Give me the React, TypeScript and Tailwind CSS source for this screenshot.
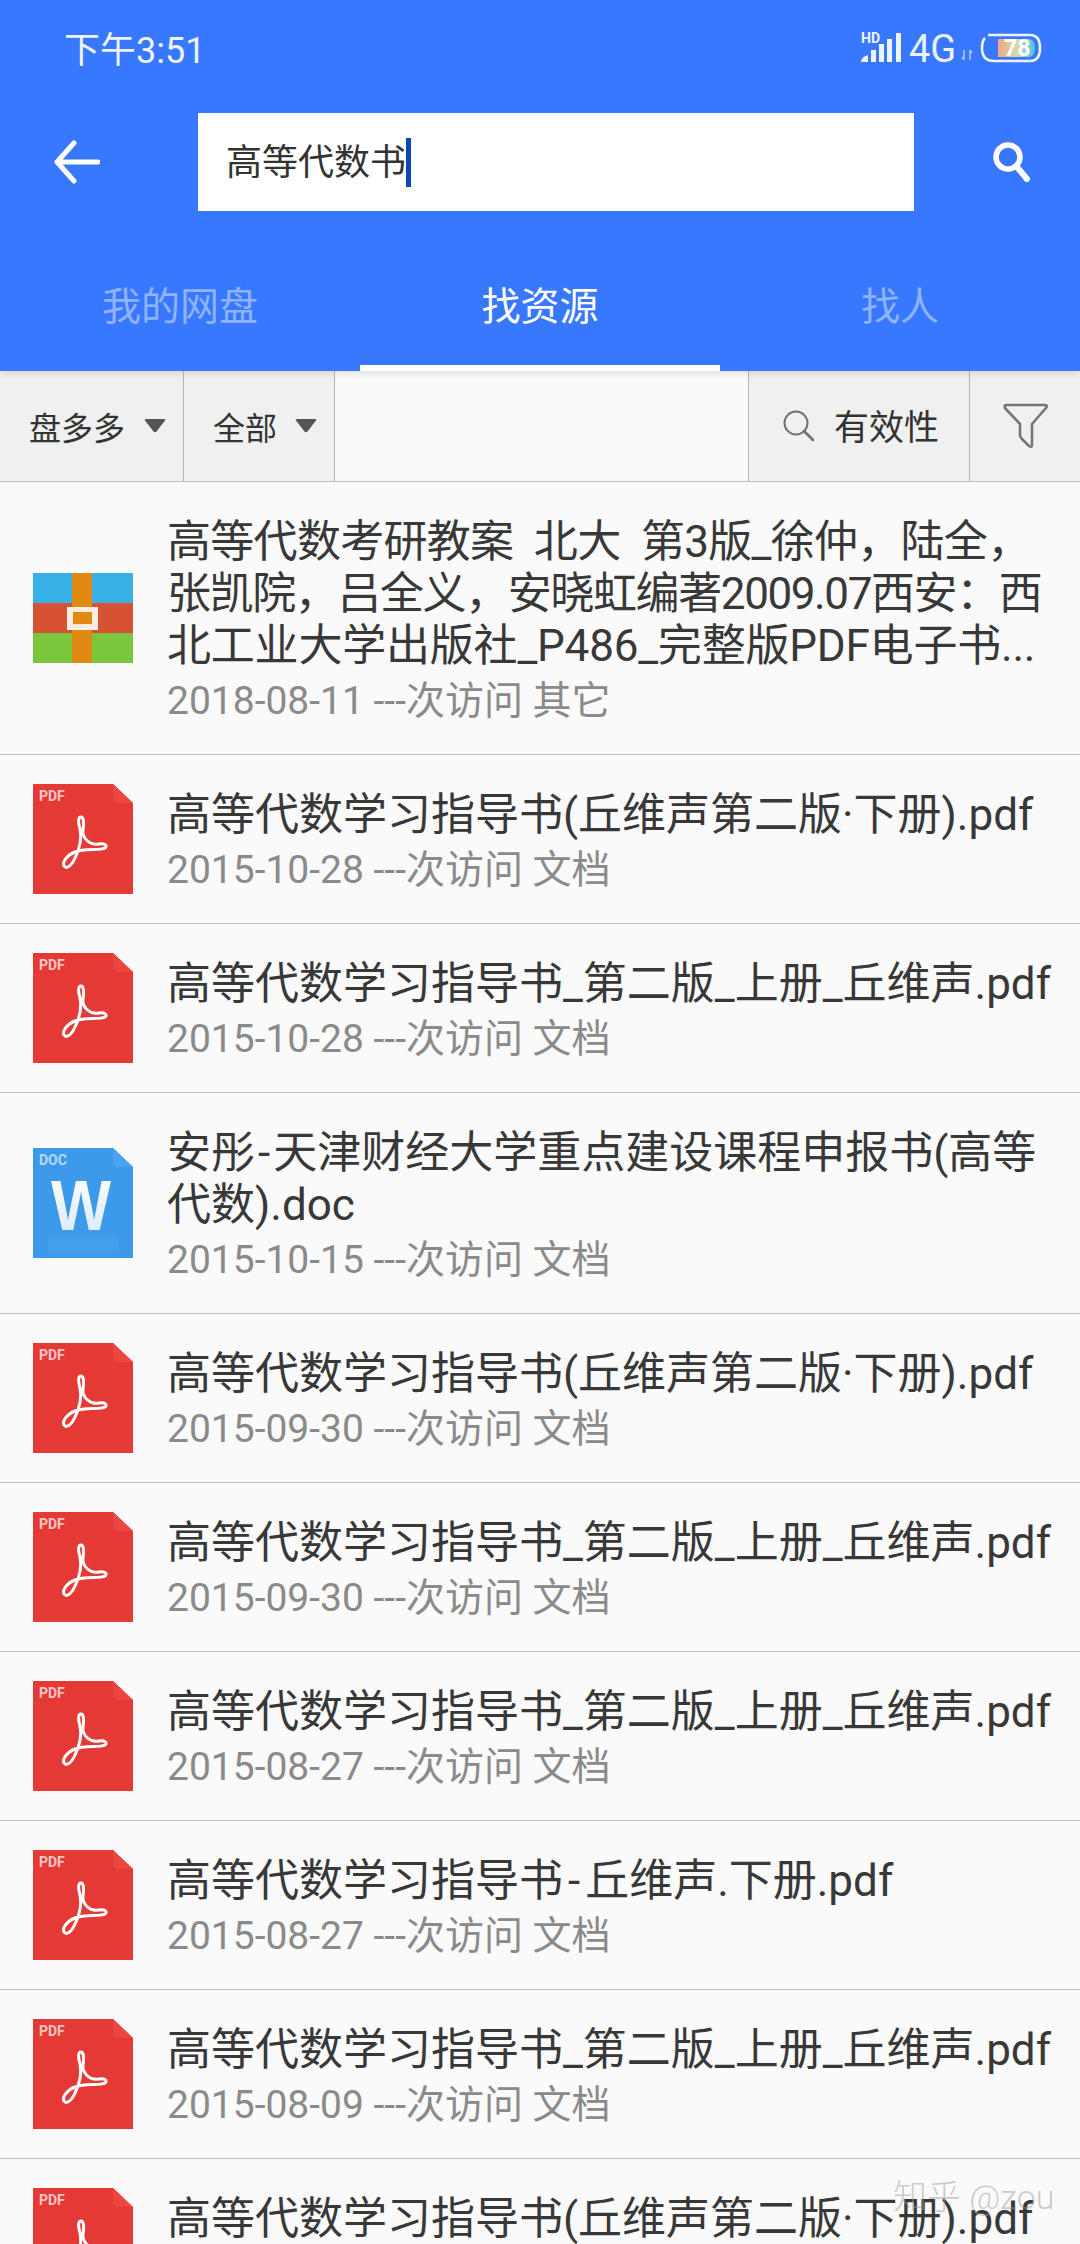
import React from "react";

type Kind = "rar" | "pdf" | "doc";
const rows: { kind: Kind; title: React.ReactNode; sub: string }[] = [
  {
    kind: "rar",
    title: (
      <>
        <span className="tracking-[-0.7px]">高等代数考研教案{"\u00a0\u00a0"}北大{"\u00a0\u00a0"}第3版_徐仲，陆全，</span>
        <br />
        <span className="tracking-[-1.4px]">张凯院，吕全义，安晓虹编著2009.07西安：西</span>
        <br />
        <span className="tracking-[-0.2px]">北工业大学出版社_P486_完整版PDF电子书...</span>
      </>
    ),
    sub: "2018-08-11 ---次访问 其它",
  },
  { kind: "pdf", title: "高等代数学习指导书(丘维声第二版·下册).pdf", sub: "2015-10-28 ---次访问 文档" },
  { kind: "pdf", title: "高等代数学习指导书_第二版_上册_丘维声.pdf", sub: "2015-10-28 ---次访问 文档" },
  {
    kind: "doc",
    title: (
      <>
        安彤<span className="px-[3px]">-</span>天津财经大学重点建设课程申报书(高等代数).doc
      </>
    ),
    sub: "2015-10-15 ---次访问 文档",
  },
  { kind: "pdf", title: "高等代数学习指导书(丘维声第二版·下册).pdf", sub: "2015-09-30 ---次访问 文档" },
  { kind: "pdf", title: "高等代数学习指导书_第二版_上册_丘维声.pdf", sub: "2015-09-30 ---次访问 文档" },
  { kind: "pdf", title: "高等代数学习指导书_第二版_上册_丘维声.pdf", sub: "2015-08-27 ---次访问 文档" },
  {
    kind: "pdf",
    title: (
      <>
        高等代数学习指导书<span className="px-[5px]">-</span>丘维声.下册.pdf
      </>
    ),
    sub: "2015-08-27 ---次访问 文档",
  },
  { kind: "pdf", title: "高等代数学习指导书_第二版_上册_丘维声.pdf", sub: "2015-08-09 ---次访问 文档" },
  { kind: "pdf", title: "高等代数学习指导书(丘维声第二版·下册).pdf", sub: "2015-08-09 ---次访问 文档" },
];

function RarIcon() {
  return (
    <svg width="100" height="90" viewBox="0 0 100 90" className="shrink-0">
      <rect width="100" height="30" fill="#38b2e6" />
      <rect y="30" width="100" height="30" fill="#d75233" />
      <rect y="60" width="100" height="30" fill="#7bc63d" />
      <rect x="39" width="20" height="90" fill="#e08a14" />
      <rect x="34" y="34" width="31" height="23" fill="#fbeee0" />
      <rect x="40" y="39" width="19" height="12" fill="#e08a14" />
    </svg>
  );
}

function PdfIcon() {
  return (
    <svg width="100" height="110" viewBox="0 0 100 110" className="shrink-0">
      <path d="M0 0H80L100 19V110H0Z" fill="#e53935" />
      <path d="M80 0L100 19H85Q80 19 80 14Z" fill="#ec4643" />
      <text x="6" y="17" fontSize="14" fontWeight="700" fill="#ffffff" fillOpacity="0.72" fontFamily="Roboto, sans-serif">PDF</text>
      <path d="M48 33C51 33 51 40 50 46C49 54 57 62 66 60C72 59 75 62 72 64C67 67 52 64 42 68C34 71 29 78 31 82C33 85 38 83 42 74C46 66 49 55 47 45C45 38 45 33 48 33Z" fill="none" stroke="#ffffff" strokeWidth="3" strokeLinejoin="round" />
    </svg>
  );
}

function DocIcon() {
  return (
    <svg width="100" height="110" viewBox="0 0 100 110" className="shrink-0">
      <defs>
        <linearGradient id="wg" x1="0" y1="0" x2="0" y2="1">
          <stop offset="0" stopColor="#ffffff" />
          <stop offset="1" stopColor="#d7e9fb" />
        </linearGradient>
      </defs>
      <path d="M0 0H80L100 19V110H0Z" fill="#3d9aea" />
      <path d="M80 0L100 19H85Q80 19 80 14Z" fill="#4aa3ee" />
      <rect x="15" y="90" width="70" height="14" fill="#4aa3ee" fillOpacity="0.5" />
      <text x="6" y="17" fontSize="14" fontWeight="700" fill="#ffffff" fillOpacity="0.65" fontFamily="Roboto, sans-serif">DOC</text>
      <text x="18" y="82" fontSize="71" fontWeight="700" fill="url(#wg)" textLength="60" lengthAdjust="spacingAndGlyphs" fontFamily="'Liberation Sans', sans-serif">W</text>
    </svg>
  );
}

function StatusIcons() {
  return (
    <svg width="190" height="36" viewBox="0 0 190 36" className="mt-[29px] mr-[32px]">
      <text x="3" y="14" fontSize="14" fontWeight="700" fill="#eef4ff" fontFamily="Roboto, sans-serif">HD</text>
      <path d="M3 33Q3 28 10 26V33Z" fill="#eef4ff" />
      <rect x="13" y="21" width="5" height="12" fill="#eef4ff" />
      <rect x="21" y="15" width="5" height="18" fill="#eef4ff" />
      <rect x="29" y="10" width="5" height="23" fill="#eef4ff" />
      <rect x="38" y="4" width="5" height="29" fill="#eef4ff" />
      <text x="51" y="33" fontSize="38" fill="#eaf1ff" fontFamily="Roboto, sans-serif" fontWeight="400">4G</text>
      <path d="M106 21V31M106 31L104 28M112 31V21M112 21L114 24" stroke="#a9c6ff" strokeWidth="1.6" fill="none" />
      <path d="M130 6H172Q182 6 182 19Q182 32 172 32H136Q124 32 124 19Q124 12 127 9" stroke="#eef4ff" strokeWidth="2.6" fill="none" />
      <defs>
        <linearGradient id="bat" x1="0" y1="0" x2="1" y2="0">
          <stop offset="0" stopColor="#f0a788" />
          <stop offset="0.5" stopColor="#d9d8a8" />
          <stop offset="1" stopColor="#4fc6e0" />
        </linearGradient>
      </defs>
      <path d="M140 10H170Q177 10 177 19Q177 28 170 28H140Z" fill="url(#bat)" />
      <text x="146" y="27" fontSize="23" fontWeight="700" fill="#ffffff" fontFamily="Roboto, sans-serif">78</text>
    </svg>
  );
}

function Caret() {
  return (
    <svg width="22" height="14" viewBox="0 0 22 14" className="shrink-0">
      <path d="M1 1.5Q0 0 2 0H20Q22 0 21 1.5L12.5 12.5Q11 14 9.5 12.5Z" fill="#555555" />
    </svg>
  );
}

export default function App() {
  return (
    <div className="relative h-[2244px] w-[1080px] overflow-hidden bg-[#fafafa] font-['Roboto','Noto_Sans_CJK_SC',sans-serif]">
      <header className="relative z-10 bg-[#3878ff] shadow-[0_3px_7px_rgba(0,0,0,0.1)]">
        <div className="flex h-[113px] items-start justify-between">
          <div className="pl-[64px] pt-[26px] text-[36px] leading-[50px] text-[#edf3ff]">下午3:51</div>
          <StatusIcons />
        </div>
        <div className="flex h-[98px] items-center">
          <div className="w-[198px] pl-[54px]">
            <svg width="46" height="44" viewBox="0 0 46 44" className="block">
              <path d="M20 3L3 22L20 41M3 22H44" stroke="#ffffff" strokeWidth="5" fill="none" strokeLinecap="round" strokeLinejoin="round" />
            </svg>
          </div>
          <div className="flex h-[98px] w-[716px] items-center bg-white pl-[28px] text-[36px] text-[#333333]">
            <span className="pt-[2px]">高等代数书</span>
            <span className="h-[49px] w-[5px] bg-[#0d47b5]" />
          </div>
          <div className="pl-[79px]">
            <svg width="38" height="40" viewBox="0 0 38 40" className="block">
              <circle cx="15" cy="15" r="12" stroke="#ffffff" strokeWidth="5.5" fill="none" />
              <path d="M24 25L34 37" stroke="#ffffff" strokeWidth="6" strokeLinecap="round" />
            </svg>
          </div>
        </div>
        <div className="grid grid-cols-3 text-center text-[39px] leading-[68px]">
          <div className="h-[160px] pt-[62px] text-[#8fb3ff]">我的网盘</div>
          <div className="h-[160px] border-b-[6px] border-white pt-[62px] text-white">找资源</div>
          <div className="h-[160px] pt-[62px] text-[#8fb3ff]">找人</div>
        </div>
      </header>

      <div className="flex h-[111px] items-stretch border-b border-[#bdbdbd] bg-[#fafafa] text-[32px] text-[#333333]">
        <div className="flex w-[184px] items-center gap-[19px] border-r border-[#b5b5b5] bg-[#f0f0f0] pl-[29px]">
          <span className="pt-[5px]">盘多多</span>
          <Caret />
        </div>
        <div className="flex w-[151px] items-center gap-[18px] border-r border-[#b5b5b5] bg-[#f0f0f0] pl-[29px]">
          <span className="pt-[5px]">全部</span>
          <Caret />
        </div>
        <div className="flex-1" />
        <div className="flex w-[221px] items-center border-l border-[#b5b5b5] bg-[#f0f0f0] pl-[34px] text-[35px]">
          <svg width="32" height="32" viewBox="0 0 32 32" className="mr-[19px] shrink-0">
            <circle cx="13" cy="13" r="11.5" stroke="#707070" strokeWidth="2" fill="none" />
            <path d="M21 21L30 30" stroke="#707070" strokeWidth="2.5" strokeLinecap="round" />
          </svg>
          <span className="pt-[7px]">有效性</span>
        </div>
        <div className="flex w-[111px] items-center border-l border-[#b5b5b5] bg-[#f0f0f0] pl-[33px]">
          <svg width="46" height="46" viewBox="0 0 46 46">
            <path d="M3 2H42Q45 2 43 5L29 21V42Q29 45 26 43L19 36Q17 34 17 32V21L2 5Q1 2 3 2Z" stroke="#757575" strokeWidth="2.6" fill="none" strokeLinejoin="round" />
          </svg>
        </div>
      </div>

      <div>
        {rows.map((r, i) => (
          <div key={i} className="flex items-center border-b border-[#bdbdbd] pl-[33px] pr-[20px]">
            <div className="flex h-[110px] w-[134px] shrink-0 items-center">
              {r.kind === "rar" ? <RarIcon /> : r.kind === "pdf" ? <PdfIcon /> : <DocIcon />}
            </div>
            <div className="min-w-0 flex-1 pb-[27px] pt-[34px]">
              <div className="text-[44px] leading-[52px] text-[#383838]">{r.title}</div>
              <div className="mt-[3px] text-[39px] leading-[52px] text-[#8a8a8a]">{r.sub}</div>
            </div>
          </div>
        ))}
      </div>

      <div className="absolute left-[893px] top-[2174px] text-[34px] font-light leading-[46px] text-[#9a9a9a]/50">知乎 @zou</div>
    </div>
  );
}
